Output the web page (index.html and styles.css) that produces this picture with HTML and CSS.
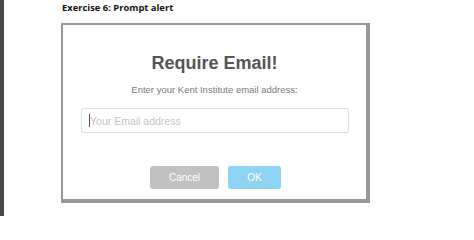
FILE: index.html
```html
<!DOCTYPE html>
<html>
<head>
<meta charset="utf-8">
<link rel="stylesheet" href="styles.css">
</head>
<body>
<div class="page">
  <div class="sidebar"></div>
  <div class="doc">
    <div class="heading">Exercise 6: Prompt alert</div>
    <div class="frame">
      <div class="dialog">
        <h1 class="title">Require Email!</h1>
        <p class="subtitle">Enter your Kent Institute email address:</p>
        <div class="input"><span class="caret"></span><span class="placeholder">Your Email address</span></div>
        <div class="actions">
          <span class="btn cancel">Cancel</span>
          <span class="btn ok">OK</span>
        </div>
      </div>
    </div>
  </div>
</div>
</body>
</html>
```
FILE: styles.css
```css
html, body {
  margin: 0;
  padding: 0;
  background: #ffffff;
}
.page {
  display: flex;
  width: 474px;
  height: 216px;
  overflow: hidden;
}
.sidebar {
  width: 4px;
  background: #464a4d;
  flex: none;
}
.doc {
  padding-left: 57px;
  flex: 1;
}
.heading {
  font-family: "Open Sans", sans-serif;
  font-weight: 700;
  font-size: 9.4px;
  line-height: 12px;
  color: #111111;
  padding-top: 2px;
  padding-left: 1px;
  height: 21px;
}
.frame {
  width: 303px;
  height: 174px;
  border-style: solid;
  border-color: #999999;
  border-width: 2px 4px 4px 2px;
  background: #ffffff;
}
.dialog {
  font-family: "Liberation Sans", Arial, sans-serif;
  display: flex;
  flex-direction: column;
  align-items: center;
}
.title {
  margin: 27px 0 0 0;
  font-size: 18px;
  line-height: 22px;
  font-weight: 700;
  color: #555555;
}
.subtitle {
  margin: 10px 0 0 0;
  font-size: 9.5px;
  line-height: 12px;
  color: #7a7a7a;
}
.input {
  box-sizing: border-box;
  margin-top: 12px;
  width: 268px;
  height: 25px;
  border: 1px solid #cfe6f0;
  border-radius: 2px;
  display: flex;
  align-items: center;
  padding-left: 7px;
  align-self: flex-start;
  margin-left: 18px;
}
.caret {
  width: 1px;
  height: 13px;
  background: #555555;
  flex: none;
}
.placeholder {
  font-size: 10.5px;
  color: #c6c6c6;
}
.actions {
  display: flex;
  gap: 9px;
  margin-top: 33px;
  margin-left: 2px;
}
.btn {
  height: 23px;
  border-radius: 3px;
  color: #ffffff;
  font-size: 10px;
  display: flex;
  align-items: center;
  justify-content: center;
}
.cancel {
  width: 69px;
  background: #c1c1c1;
}
.ok {
  width: 53px;
  background: #8ed2f4;
}
```
